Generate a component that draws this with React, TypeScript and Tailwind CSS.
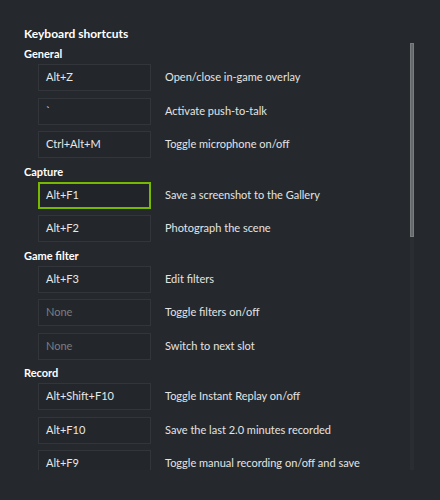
import React from 'react';

type Shortcut = { keys: string; label: string };
type Section = { title: string; items: Shortcut[] };

const sections: Section[] = [
  {
    title: 'General',
    items: [
      { keys: 'Alt+Z', label: 'Open/close in-game overlay' },
      { keys: '`', label: 'Activate push-to-talk' },
      { keys: 'Ctrl+Alt+M', label: 'Toggle microphone on/off' },
    ],
  },
  {
    title: 'Capture',
    items: [
      { keys: 'Alt+F1', label: 'Save a screenshot to the Gallery' },
      { keys: 'Alt+F2', label: 'Photograph the scene' },
    ],
  },
  {
    title: 'Game filter',
    items: [
      { keys: 'Alt+F3', label: 'Edit filters' },
      { keys: '', label: 'Toggle filters on/off' },
      { keys: '', label: 'Switch to next slot' },
    ],
  },
  {
    title: 'Record',
    items: [
      { keys: 'Alt+Shift+F10', label: 'Toggle Instant Replay on/off' },
      { keys: 'Alt+F10', label: 'Save the last 2.0 minutes recorded' },
      { keys: 'Alt+F9', label: 'Toggle manual recording on/off and save' },
    ],
  },
];

const ShortcutRow: React.FC<{ item: Shortcut; focused?: boolean }> = ({ item, focused }) => (
  <div className="flex items-center">
    <div
      className={
        focused
          ? 'ml-[14px] flex h-[27px] w-[113px] items-center border-2 border-[#76b900] bg-[#212428] pl-[6px]'
          : 'ml-[14px] flex h-[27px] w-[113px] items-center border border-[#32363b] bg-[#23272b] pl-[7px]'
      }
    >
      {item.keys ? (
        <span className="text-[11px] text-[#e8e8e8]">{item.keys}</span>
      ) : (
        <span className="text-[11px] text-[#7b7e82]">None</span>
      )}
    </div>
    <span className="ml-[14px] text-[11px] text-[#e4e4e4]">{item.label}</span>
  </div>
);

export default function App() {
  return (
    <div
      className="relative h-[500px] w-[440px] overflow-hidden bg-[#25292d] pl-6"
      style={{ fontFamily: 'Lato, "Open Sans", sans-serif' }}
    >
      <div className="mt-6 h-5 text-[12px] font-bold leading-5 text-white">Keyboard shortcuts</div>

      <div className="h-[426px] overflow-hidden">
        {sections.map((section, si) => (
          <div key={section.title} className={si === 0 ? '' : 'mt-[3.5px]'}>
            <div className="h-5 text-[11px] font-bold leading-5 text-white">{section.title}</div>
            <div className="flex flex-col gap-[6.5px]">
              {section.items.map((item) => (
                <ShortcutRow key={item.label} item={item} focused={item.keys === 'Alt+F1'} />
              ))}
            </div>
          </div>
        ))}
      </div>

      {/* scrollbar */}
      <div className="absolute left-[410px] top-[43px] h-[427px] w-[4px] bg-[#2a2e32]" />
      <div className="absolute left-[410px] top-[43px] h-[194px] w-[4px] border border-[#7a7d80] bg-[#66696c]" />
    </div>
  );
}
